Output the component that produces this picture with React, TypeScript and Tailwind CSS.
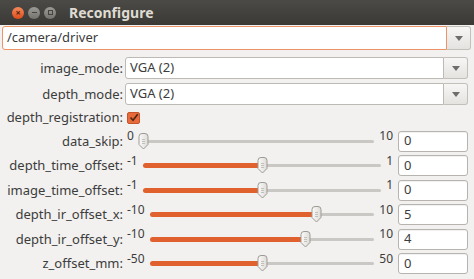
import React from 'react';

type SliderParam = {
  name: string;
  min: number;
  max: number;
  value: number;
};

const sliders: SliderParam[] = [
  { name: 'data_skip', min: 0, max: 10, value: 0 },
  { name: 'depth_time_offset', min: -1, max: 1, value: 0 },
  { name: 'image_time_offset', min: -1, max: 1, value: 0 },
  { name: 'depth_ir_offset_x', min: -10, max: 10, value: 5 },
  { name: 'depth_ir_offset_y', min: -10, max: 10, value: 4 },
  { name: 'z_offset_mm', min: -50, max: 50, value: 0 },
];

function DropArrow() {
  return (
    <svg width="8" height="5" viewBox="0 0 8 5">
      <path d="M0 0 H8 L4 5 Z" fill="#6e6d6a" />
    </svg>
  );
}

function Combo({ text, focused }: { text: string; focused?: boolean }) {
  return (
    <div className="flex h-full flex-1">
      <div
        className={`flex flex-1 items-center rounded-l-[3px] border bg-white pl-[4px] text-[13px] text-[#3c3c3c] ${
          focused ? 'border-[#ec9468]' : 'border-[#bdbab5]'
        }`}
      >
        {text}
      </div>
      <div className="flex w-[24px] items-center justify-center rounded-r-[3px] border border-l-0 border-[#c3c0bb] bg-gradient-to-b from-[#f7f6f5] to-[#e5e3e0]">
        <DropArrow />
      </div>
    </div>
  );
}

function Thumb() {
  return (
    <svg width="11" height="17" viewBox="0 0 11 17">
      <defs>
        <linearGradient id="thumbGrad" x1="0" y1="0" x2="1" y2="0">
          <stop offset="0" stopColor="#fbfaf9" />
          <stop offset="1" stopColor="#dedcd8" />
        </linearGradient>
      </defs>
      <path
        d="M1 3.5 Q1 0.5 4 0.5 H7 Q10 0.5 10 3.5 V11.5 L5.5 16 L1 11.5 Z"
        fill="url(#thumbGrad)"
        stroke="#9d9a95"
      />
      <path d="M4 6.5 H7 M4 8.5 H7 M4 10.5 H7" stroke="#b8b5b0" strokeWidth="0.8" />
    </svg>
  );
}

function Slider({ min, max, value }: { min: number; max: number; value: number }) {
  const frac = (value - min) / (max - min);
  return (
    <div className="relative h-[17px] flex-1">
      <div className="absolute left-[2px] right-[2px] top-[7px] h-[3px] rounded-full bg-[#cac8c4]" />
      {frac > 0 && (
        <div
          className="absolute left-[1px] top-[6px] h-[5px] rounded-full bg-[#e0612e]"
          style={{ width: `calc((100% - 11px) * ${frac} + 4px)` }}
        />
      )}
      <div className="absolute top-0" style={{ left: `calc((100% - 11px) * ${frac})` }}>
        <Thumb />
      </div>
    </div>
  );
}

function Label({ children }: { children: React.ReactNode }) {
  return <div className="w-[123px] shrink-0 text-right text-[13px] leading-none text-[#3c3c3c]">{children}</div>;
}

export default function App() {
  return (
    <div
      className="flex h-[279px] w-[474px] flex-col overflow-hidden bg-[#f2f1ef]"
      style={{ fontFamily: '"Noto Sans", "Open Sans", sans-serif' }}
    >
      {/* title bar */}
      <div className="flex h-[25px] shrink-0 items-center bg-gradient-to-b from-[#4b4a46] to-[#3a3935] pl-[12px]">
        <div className="flex items-center gap-[4px]">
          <div className="flex h-[12px] w-[12px] items-center justify-center rounded-full bg-gradient-to-b from-[#f58a5a] to-[#dd4a14] text-[9px] font-bold leading-none text-[#4a2410]">
            ×
          </div>
          <div className="flex h-[12px] w-[12px] items-center justify-center rounded-full bg-gradient-to-b from-[#9d9b95] to-[#75736e]">
            <div className="h-[1.5px] w-[5px] bg-[#45443f]" />
          </div>
          <div className="flex h-[12px] w-[12px] items-center justify-center rounded-full bg-gradient-to-b from-[#9d9b95] to-[#75736e]">
            <div className="h-[5px] w-[5px] border border-[#45443f]" />
          </div>
        </div>
        <div className="ml-[13px] text-[14px] font-bold text-[#dfdbd2]">Reconfigure</div>
      </div>

      {/* node selector */}
      <div className="mt-[1px] flex h-[24px] px-[2px] pr-[3px]">
        <Combo text="/camera/driver" focused />
      </div>

      <div className="mt-[7px] flex flex-col gap-[4px] pr-[6px]">
        <div className="flex h-[22px] items-center gap-[2px]">
          <Label>image_mode:</Label>
          <Combo text="VGA (2)" />
        </div>
        <div className="flex h-[22px] items-center gap-[2px]">
          <Label>depth_mode:</Label>
          <Combo text="VGA (2)" />
        </div>
        <div className="flex h-[17px] items-center gap-[4px]">
          <Label>depth_registration:</Label>
          <div className="flex h-[12px] w-[13px] items-center justify-center rounded-[2px] border border-[#c4552a] bg-[#e8693a]">
            <svg width="10" height="9" viewBox="0 0 10 9">
              <path d="M1.5 4.5 L4 7.2 L8.7 1.2" fill="none" stroke="#4a2618" strokeWidth="1.6" />
            </svg>
          </div>
        </div>
      </div>

      <div className="mt-[4px] flex flex-col gap-[2.5px] pr-[6px]">
        {sliders.map((s) => (
          <div key={s.name} className="flex h-[22px] items-center">
            <Label>{s.name}:</Label>
            <div className="ml-[4px] self-start text-[12px] leading-none text-[#3c3c3c]">{s.min}</div>
            <div className="ml-[4px] mr-[3px] flex flex-1 items-center">
              <Slider min={s.min} max={s.max} value={s.value} />
            </div>
            <div className="self-start text-[12px] leading-none text-[#3c3c3c]">{s.max}</div>
            <div className="ml-[5px] flex h-[21px] w-[70px] items-center rounded-[3px] border border-[#b7b4af] bg-white pl-[5px] text-[13px] text-[#3c3c3c] shadow-[inset_0_1px_1px_rgba(0,0,0,0.06)]">
              {s.value}
            </div>
          </div>
        ))}
      </div>
    </div>
  );
}
